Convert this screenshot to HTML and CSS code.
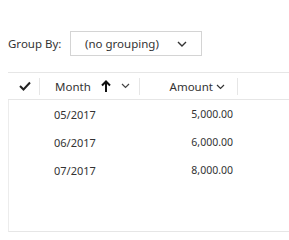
FILE: index.html
```html
<!DOCTYPE html>
<html lang="en">
<head>
    <meta charset="UTF-8">
    <title>Group By Grid</title>
    <link rel="stylesheet" href="styles.css">
</head>
<body>
    <div class="toolbar">
        <span class="toolbar-label">Group By:</span>
        <div class="dropdown">
            <span>(no grouping)</span>
            <svg class="chev" width="10" height="6" viewBox="0 0 10 6"><polyline points="1,1 5,5 9,1" fill="none" stroke="#333" stroke-width="1.4"/></svg>
        </div>
    </div>

    <div class="grid">
        <div class="grid-header">
            <div class="col col-check">
                <svg width="12" height="10" viewBox="0 0 12 10"><polyline points="1,5 4.5,8.5 11,1.5" fill="none" stroke="#222" stroke-width="2"/></svg>
            </div>
            <div class="col col-month">
                <span>Month</span>
                <svg class="sort" width="10" height="12" viewBox="0 0 10 12"><line x1="5" y1="2" x2="5" y2="12" stroke="#111" stroke-width="2"/><polyline points="1,5.5 5,1.5 9,5.5" fill="none" stroke="#111" stroke-width="2"/></svg>
                <svg class="chev" width="9" height="6" viewBox="0 0 9 6"><polyline points="1,1 4.5,4.5 8,1" fill="none" stroke="#444" stroke-width="1.2"/></svg>
            </div>
            <div class="col col-amount">
                <span>Amount</span>
                <svg class="chev small" width="9" height="6" viewBox="0 0 9 6"><polyline points="1,1 4.5,4.5 8,1" fill="none" stroke="#333" stroke-width="1.2"/></svg>
            </div>
        </div>
        <div class="grid-body">
            <div class="row"><div class="cell cell-check"></div><div class="cell cell-month">05/2017</div><div class="cell cell-amount">5,000.00</div></div>
            <div class="row"><div class="cell cell-check"></div><div class="cell cell-month">06/2017</div><div class="cell cell-amount">6,000.00</div></div>
            <div class="row"><div class="cell cell-check"></div><div class="cell cell-month">07/2017</div><div class="cell cell-amount">8,000.00</div></div>
        </div>
    </div>
</body>
</html>
```

FILE: styles.css
```css
body {
    margin: 0;
    padding: 0 0 0 8px;
    font-family: "Noto Sans", "Open Sans", sans-serif;
    font-size: 11.5px;
    color: #333;
    background: #fff;
}

.toolbar {
    display: flex;
    align-items: center;
    margin-top: 31px;
    height: 25px;
}

.toolbar-label {
    width: 62px;
}

.dropdown {
    display: flex;
    align-items: center;
    justify-content: space-between;
    box-sizing: border-box;
    width: 132px;
    height: 25px;
    padding: 0 14px 0 14px;
    border: 1px solid #d4d4d4;
}

.grid {
    margin-top: 16px;
}

.grid-header {
    display: flex;
    height: 26px;
    border-top: 1px solid #e6e6e6;
    border-bottom: 1px solid #e6e6e6;
}

.col {
    display: flex;
    align-items: center;
    position: relative;
    box-sizing: border-box;
}

/* short column separators */
.col::after {
    content: "";
    position: absolute;
    right: 0;
    top: 5px;
    bottom: 4px;
    width: 1px;
    background: #e6e6e6;
}

.col-check {
    width: 32px;
    justify-content: center;
    padding-left: 2px;
}

.col-month {
    width: 100px;
    padding-left: 15px;
}

.col-month .sort {
    margin-left: 10px;
}

.col-month .chev {
    margin-left: 10px;
}

.col-amount {
    width: 98px;
    justify-content: flex-end;
    padding-right: 13px;
}

.col-amount .chev {
    margin-left: 3px;
    margin-top: 2px;
}

.grid-body {
    height: 131px;
    border-left: 1px solid #ececec;
    border-bottom: 1px solid #e6e6e6;
}

.row {
    display: flex;
    height: 28px;
    align-items: center;
}

.cell-check {
    width: 31px;
}

.cell-month {
    width: 100px;
    padding-left: 14px;
    box-sizing: border-box;
    font-size: 11px;
}

.cell-amount {
    width: 98px;
    text-align: right;
    padding-right: 5px;
    box-sizing: border-box;
    font-size: 10.5px;
}
```
